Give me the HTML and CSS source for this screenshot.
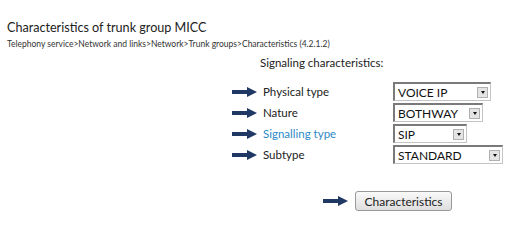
FILE: index.html
```html
<!DOCTYPE html>
<html>
<head>
<meta charset="utf-8">
<link rel="stylesheet" href="styles.css">
</head>
<body>
<div class="page">
  <header class="head">
    <h1 class="title">Characteristics of trunk group MICC</h1>
    <div class="crumbs">Telephony service&gt;Network and links&gt;Network&gt;Trunk groups&gt;Characteristics (4.2.1.2)</div>
  </header>
  <section class="form">
    <div class="section-title">Signaling characteristics:</div>
    <div class="rows">
      <div class="row">
        <svg class="arrow" viewBox="0 0 25 10"><path d="M0 3H15V0L25 5L15 10V7H0Z"/></svg>
        <span class="label">Physical type</span>
        <span class="select w1"><span class="val">VOICE IP</span><span class="btn"><i></i></span></span>
      </div>
      <div class="row">
        <svg class="arrow" viewBox="0 0 25 10"><path d="M0 3H15V0L25 5L15 10V7H0Z"/></svg>
        <span class="label">Nature</span>
        <span class="select w2"><span class="val">BOTHWAY</span><span class="btn"><i></i></span></span>
      </div>
      <div class="row">
        <svg class="arrow" viewBox="0 0 25 10"><path d="M0 3H15V0L25 5L15 10V7H0Z"/></svg>
        <span class="label link">Signalling type</span>
        <span class="select w3"><span class="val">SIP</span><span class="btn"><i></i></span></span>
      </div>
      <div class="row">
        <svg class="arrow" viewBox="0 0 25 10"><path d="M0 3H15V0L25 5L15 10V7H0Z"/></svg>
        <span class="label">Subtype</span>
        <span class="select w4"><span class="val">STANDARD</span><span class="btn"><i></i></span></span>
      </div>
    </div>
    <div class="action">
      <svg class="arrow" viewBox="0 0 25 10"><path d="M0 3H15V0L25 5L15 10V7H0Z"/></svg>
      <button class="button">Characteristics</button>
    </div>
  </section>
</div>
</body>
</html>
```
FILE: styles.css
```css
* { box-sizing: border-box; }
html, body { margin: 0; padding: 0; background: #fff; }
body { font-family: Lato, "Open Sans", sans-serif; color: #222; width: 529px; height: 249px; overflow: hidden; }
.page { padding-top: 20px; }
.head { padding-left: 7px; }
.title { margin: 0; font-size: 12.6px; font-weight: normal; line-height: 16px; color: #222; }
.crumbs { margin-top: 3px; font-size: 8.5px; line-height: 11px; color: #333; }
.form { margin-left: 232px; }
.section-title { margin: 6px 0 0 28px; font-size: 11.5px; line-height: 13px; color: #222; }
.rows { margin-top: 13px; display: flex; flex-direction: column; gap: 2px; }
.row { display: flex; align-items: center; height: 19px; }
.arrow { width: 25px; height: 10px; fill: #1f3864; flex: none; }
.label { margin-left: 6px; width: 130px; font-size: 11.5px; color: #222; }
.label.link { color: #2d8ac7; }
.select { display: flex; align-items: center; justify-content: space-between; height: 19px; border-style: solid; border-width: 2px 1px 1px 2px; border-color: #7a7a7a #c4c4c4 #c4c4c4 #7a7a7a; background: #fff; padding: 0 2px 0 3px; }
.val { font-size: 12px; color: #111; }
.btn { width: 11px; height: 11px; background: #e4e4e4; border: 1px solid #b0b0b0; display: flex; align-items: center; justify-content: center; }
.btn i { width: 0; height: 0; border-left: 2.5px solid transparent; border-right: 2.5px solid transparent; border-top: 3px solid #111; }
.w1 { width: 98px; }
.w2 { width: 90px; }
.w3 { width: 74px; }
.w4 { width: 110px; }
.action { display: flex; align-items: center; margin: 27px 0 0 91px; gap: 7px; }
.button { width: 97px; height: 20px; font-family: inherit; font-size: 12px; color: #222; border: 1px solid #999; border-radius: 3px; background: linear-gradient(#fafafa, #dedede); padding: 0; }
```
